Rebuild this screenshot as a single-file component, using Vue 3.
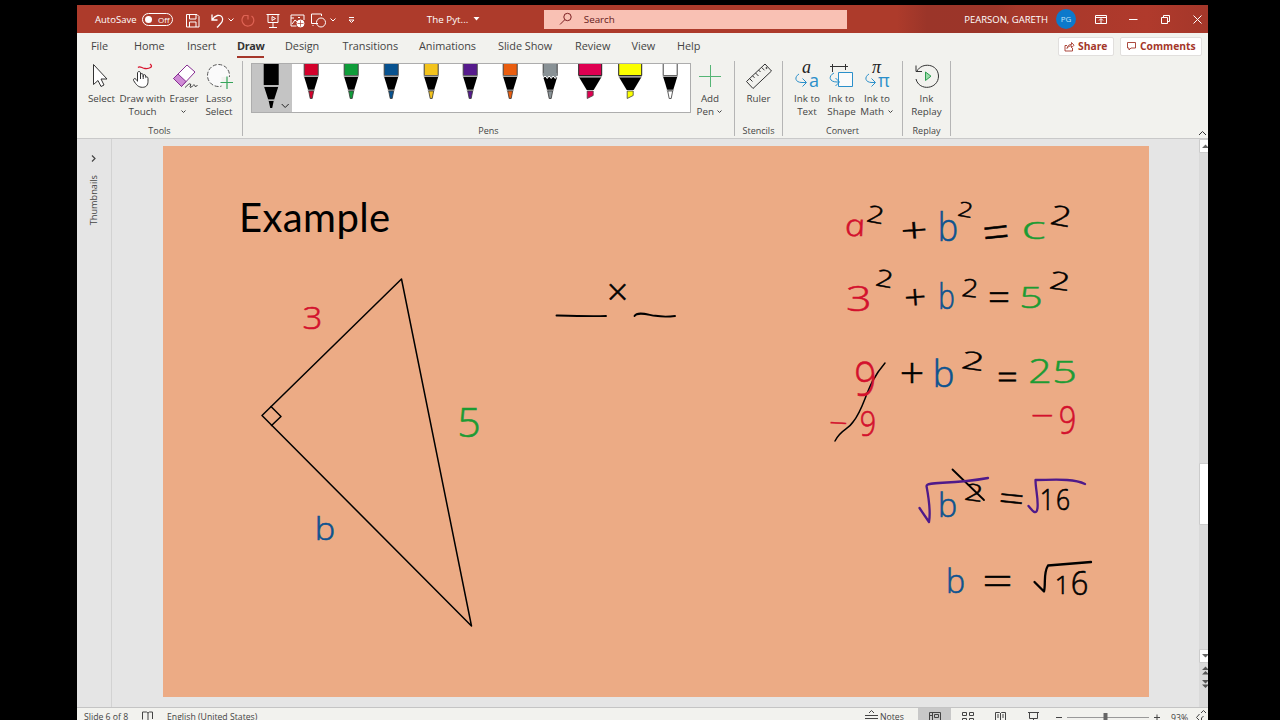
<template>
  <div class="window">
    <!-- TITLE BAR -->
    <header class="titlebar">
      <span class="autosave">AutoSave</span>
      <span class="toggle"><i></i>Off</span>
      <svg class="quick" width="180" height="28" viewBox="0 0 180 28">
        <g fill="none" stroke="#fff" stroke-width="1">
          <path d="M4.500 9.500h10.500l2 2v10.500h-12.500zM7.500 9.500v4.500h6.500v-4.500M7.500 22v-5h6.500v5" />
          <path d="M30 9.500v5.500h5.500M30 15c3-5 8-6 10-3c2.500 4-2 7-5 10.500" stroke-width="1.300" />
          <path d="M46.500 13.500l2.500 2.500l2.500-2.500" />
          <path d="M62 10.500c-4.500 5-.5 11 4.500 10.500c5.500-.5 7-7 3-10M61.500 10.500h4.500v4" stroke="#df6455" stroke-width="1.200" />
          <path d="M84.500 9.500h13M86 9.500v8h10v-8M91 17.500v4.500M87 22.500h8M90 11.500l3.500 2l-3.500 2z" />
          <path d="M114.500 21h-5.500v-11h13v5M109 13h3M110 19l3-4l3 2.500M116 12.500h2" />
          <circle cx="118.500" cy="18.500" r="3.500" fill="#fff" />
          <path d="M115.500 18.500h6M118.500 15.500v6" stroke="#a93a2c" stroke-width=".7" />
          <path d="M136 18.500h-6.500v-9.500h10v2M131 20v1" />
          <circle cx="139" cy="17.500" r="4.500" />
          <path d="M148.500 13.500l2.500 2.500l2.500-2.500" />
          <path d="M167 12.500h5M167 15l2.500 2.500l2.500-2.500z" />
        </g>
      </svg>
      <span class="filename">The Pyt...</span>
      <svg class="caret" width="7" height="4" viewBox="0 0 7 4"><path d="M.5 0h6L3.500 3.500z" fill="#fff" /></svg>
      <div class="search">
        <svg width="14" height="14" viewBox="0 0 14 14" fill="none" stroke="#7c1f22" stroke-width="1">
          <circle cx="8.500" cy="5" r="3.700" /><path d="M5.800 7.700L1 12.500" />
        </svg>
        <span>Search</span>
      </div>
      <span class="user">PEARSON, GARETH</span>
      <span class="avatar">PG</span>
      <svg class="controls" width="120" height="28" viewBox="0 0 120 28" fill="none" stroke="#fff">
        <path d="M7.500 10.500h11v8h-11zM7.500 12.500h11M13 18v-4M11 15.500l2-2l2 2" />
        <path d="M41 14.500h8.500" />
        <path d="M73.500 12.500h6v6h-6zM75.500 12v-1.500h6v6h-1.500" />
        <path d="M105.500 10.500l8 8M113.500 10.500l-8 8" />
      </svg>
    </header>

    <!-- TABS -->
    <nav class="tabs">
      <span v-for="tab in tabs" :key="tab"><b :class="{ active: tab === 'Draw' }">{{ tab }}</b></span>
      <button class="share">
        <svg width="11" height="11" viewBox="0 0 11 11" fill="none" stroke="#a4372a" stroke-width=".9">
          <path d="M3 4.500h-2v5.500h7.500v-3M3 7.500c.5-3 2-4 4.500-4v-2l2.500 2.700l-2.500 2.600v-2c-2 0-3.500 .8-4.500 2.700z" />
        </svg>Share
      </button>
      <button class="comments">
        <svg width="11" height="11" viewBox="0 0 11 11" fill="none" stroke="#a4372a" stroke-width=".9">
          <path d="M1.500 1.500h8v5.500h-4.500l-2 2v-2h-1.500z" />
        </svg>Comments
      </button>
    </nav>

    <!-- RIBBON -->
    <section class="ribbon">
      <div class="group tools">
        <div class="row">
          <div class="tool">
            <svg width="28" height="26" viewBox="0 0 28 26">
              <path d="M5.500 1.500v20l4.500-4l3 6l3-1.500l-3-6h6z" fill="#fff" stroke="#333" />
            </svg>
            <p>Select</p>
          </div>
          <div class="tool">
            <svg width="28" height="26" viewBox="0 0 28 26" fill="none">
              <path d="M9 4.500c2-2 4 .8 7 1c4 .5 9-1.500 5-4.500" stroke="#d8162f" stroke-width="1.300" />
              <path d="M8.500 18v-8c0-2 3-2 3 0v4v-2.500c.5-1.500 2.700-1 2.700 .5v2v-1.500c.5-1.300 2.500-1 2.500 .5v1.500c.5-1 2.300-.8 2.300 .8v3c0 4-2 6-5.500 6c-4 0-6-2-9-7c-.5-1.500 1.500-2.500 2.500-1z" fill="#fff" stroke="#333" />
              <path d="M8.500 10v8.500M11.500 14v2M14.200 14v2" stroke="#333" />
            </svg>
            <p>Draw with<br />Touch</p>
          </div>
          <div class="tool">
            <svg width="28" height="26" viewBox="0 0 28 26" fill="none" stroke="#862d91">
              <path d="M3.500 15.500l13.500-13.500l8 7l-13.500 14.500z" fill="#fff" />
              <path d="M3.500 15.500l4.500-4.500l8 7.500l-4.500 5z" fill="#cf8bd5" />
              <path d="M15 24.500c2-1.500 4-4.500 5.500-3.500c1 1-1.500 3 0 3.500c1.500-.2 2.500-3 3.800-2.500s0 1.500 1.200 1.500s1.500-1 2-1.500" stroke="#333" />
            </svg>
            <p>Eraser<br /><Chevron /></p>
          </div>
          <div class="tool">
            <svg width="28" height="26" viewBox="0 0 28 26" fill="none">
              <circle cx="13.500" cy="12.500" r="11" fill="#fafafa" stroke="#555" stroke-dasharray="4 1.700" />
              <path d="M16.500 14h11v11h-11z" fill="#f2f2ee" />
              <path d="M15.500 19.500h12.500M22 13.500v12.500" stroke="#35a45a" stroke-width="1.200" />
            </svg>
            <p>Lasso<br />Select</p>
          </div>
        </div>
        <footer>Tools</footer>
      </div>

      <div class="group pens">
        <div class="row">
          <div class="gallery">
            <div v-for="(pen, i) in pens" :key="i" class="pen" :class="{ chosen: i === 0 }">
              <svg width="40" height="48" viewBox="0.8 0 40 48">
                <g v-if="pen.kind === 'chosen'">
                  <path d="M12.500 0h15v21h-15zM13 23h14l-4 12.500h-6zM17.500 37h5l-1.500 7h-2z" fill="#000" />
                  <path d="M12.500 22h15M16.500 36.200h7" stroke="#aaa" />
                  <path d="M30.500 40l3.500 3.500l3.500-3.500" fill="none" stroke="#222" />
                </g>
                <g v-else-if="pen.kind === 'marker'">
                  <path d="M8.500-1h23v12.500h-23z" :fill="pen.color" stroke="#222" />
                  <path d="M8.500 12.700h23" stroke="#999" stroke-width="1.500" />
                  <path d="M9 13.500h22l-7.500 12.500h-7z" fill="#000" />
                  <path d="M17 27h6v4.500l-6 3z" :fill="pen.color" stroke="#444" stroke-width=".8" />
                </g>
                <g v-else>
                  <path d="M13-1h14v12.500h-14z" :fill="pen.color" stroke="#444" />
                  <path d="M13 13h14l-4 13h-6z" fill="#000" />
                  <path v-if="pen.kind !== 'pencil'" d="M12.500 12.200h15" stroke="#999" stroke-width="1.300" />
                  <path d="M16.500 26.200h7" stroke="#999" stroke-width="1.300" />
                  <path d="M17.500 27h5l-1.500 7.500h-2z" :fill="pen.color" stroke="#333" stroke-width=".8" />
                  <path v-if="pen.kind === 'pencil'" d="M13 9v5l2-2l2 2.500l2-2.500l2 2.500l2-2.500l2 2.500l2-2.500v-3z" fill="#899296" />
                  <path v-if="pen.kind === 'pencil'" d="M13 14l2-2l2 2.500l2-2.500l2 2.500l2-2.500l2 2.500l2-2.500" fill="none" stroke="#fff" />
                </g>
              </svg>
            </div>
          </div>
          <div class="tool add">
            <svg width="28" height="26" viewBox="0 0 28 26"><path d="M3 13.500h22M14.500 2v22" stroke="#55b575" fill="none" /></svg>
            <p>Add<br />Pen <Chevron /></p>
          </div>
        </div>
        <footer>Pens</footer>
      </div>

      <div class="group stencils">
        <div class="row">
          <div class="tool">
            <svg width="28" height="26" viewBox="0 0 28 26" fill="none" stroke="#333">
              <path d="M1.500 18.500l18.500-17.500l6.500 7l-18.500 17.500zM4.500 15.500l3 3M7.500 12.800l2 2M10.500 10l3 3M13.500 7l2 2M16.500 4.300l3 3" />
              <circle cx="21.500" cy="5" r=".6" />
            </svg>
            <p>Ruler</p>
          </div>
        </div>
        <footer>Stencils</footer>
      </div>

      <div class="group convert">
        <div class="row">
          <div class="tool">
            <svg width="28" height="26" viewBox="0 0 28 26" fill="none">
              <text x="9" y="10" class="glyph-dark">a</text>
              <text x="16" y="24" class="glyph-blue">a</text>
              <path d="M6 11c-5 3-4 8.500 3 8.500h4M9.500 15.500l4 4l-4 4" stroke="#2a8fca" />
            </svg>
            <p>Ink to<br />Text</p>
          </div>
          <div class="tool">
            <svg width="28" height="26" viewBox="0 0 28 26" fill="none">
              <path d="M3 3.500h18M5.500 1v8M18.500 1v6" stroke="#333" />
              <path d="M11.500 9.500h14v14h-14z" stroke="#2a8fca" fill="#fafafa" />
              <path d="M7 10c-6 3-5 9 3 9h2M8.500 15l4 4l-4 4" stroke="#2a8fca" />
            </svg>
            <p>Ink to<br />Shape</p>
          </div>
          <div class="tool">
            <svg width="28" height="26" viewBox="0 0 28 26" fill="none">
              <text x="9" y="10" class="glyph-dark">π</text>
              <text x="15" y="24" class="glyph-blue">π</text>
              <path d="M6 11c-5 3-4 8.500 3 8.500h3M8.500 15.500l4 4l-4 4" stroke="#2a8fca" />
            </svg>
            <p>Ink to<br />Math <Chevron /></p>
          </div>
        </div>
        <footer>Convert</footer>
      </div>

      <div class="group replay">
        <div class="row">
          <div class="tool">
            <svg width="28" height="26" viewBox="0 0 28 26" fill="none">
              <path d="M4 8c5-9 21-7.500 21.500 5c0 13.500-19.500 15.500-22.500 3" stroke="#333" />
              <path d="M3 2.500v6h6" stroke="#333" />
              <path d="M12.500 9v8.500l5.500-4.300z" fill="#9bdca9" stroke="#2d9d50" />
            </svg>
            <p>Ink<br />Replay</p>
          </div>
        </div>
        <footer>Replay</footer>
      </div>
      <svg class="collapse" width="9" height="6" viewBox="0 0 9 6"><path d="M1 5l3.500-3.500L8 5" fill="none" stroke="#333" /></svg>
    </section>

    <!-- WORKSPACE -->
    <main class="workspace">
      <aside class="thumbs">
        <svg width="7" height="9" viewBox="0 0 7 9"><path d="M2 1.500l3 3l-3 3" fill="none" stroke="#444" stroke-width="1.200" /></svg>
        <span>Thumbnails</span>
      </aside>
      <div class="stage">
        <div class="slide">
          <h1>Example</h1>
          <svg class="ink" width="986" height="551" viewBox="163 146 986 551">
            <g fill="none" stroke="#000" stroke-width="1.500" stroke-linejoin="round" stroke-linecap="round">
              <path d="M401.500 279L262 415.500L471.500 626z" />
              <path d="M271 406.500l10 10l-9.500 9" />
              <path d="M556.500 315.500c17 .5 33 1 49.500 .5M634.500 316c3-5 14-1 21-.2c6 1 13 1 19.500 .2" stroke-width="1.900" />
              <path d="M885 363C865 386 866 406 853 422C848 430 841 429 835 441" />
              <path d="M952.500 469.500L984 500" stroke-width="1.800" />
              <g stroke="#4f1a8a" stroke-width="2.300">
                <path d="M919.500 508L929 522C931 511 928 494 926.500 486C927 481 949 485 988 478" />
                <path d="M1028.500 506c4 5 8 10 9 2c1-9-2-19-2-28c17 0 37-2 49.500 4" />
              </g>
              <path d="M1034.500 582l9.500 9.500c2-8-1-18 4-26l43-3.500" stroke-width="2.300" />
            </g>
            <text v-for="(m, i) in marks" :key="i" :transform="place(m)" :fill="m.color" :stroke="m.color" :class="{ round: m.ch === 'a' }">{{ m.ch }}</text>
          </svg>
        </div>
      </div>
      <div class="scroll">
        <svg width="9" height="569" viewBox="0 0 9 569">
          <path d="M.5 .5h9v13h-9zM.5 324.500h9v61h-9zM.5 510.500h9v13h-9z" fill="#fff" stroke="#ccc" />
          <path d="M3 9l3.500-3.500l3.500 3.500zM3 515h7l-3.500 3.500z" fill="#666" />
          <path d="M3 531l3.500-3.500l3.500 3.500zM3 535.500l3.500-3.500l3.500 3.500zM3 541h7l-3.500 3.500zM3 545.500h7l-3.500 3.500z" fill="#555" />
        </svg>
      </div>
    </main>

    <!-- STATUS BAR -->
    <footer class="status">
      <span class="count">Slide 6 of 8</span>
      <svg class="book" width="12" height="13" viewBox="0 0 12 13" fill="none" stroke="#444"><path d="M.5 8.500v-7.500h4l1.500 1l1.500-1h3v7M6 2v8M.5 9.500h4" /></svg>
      <span class="lang">English (United States)</span>
      <svg class="notes-icon" width="13" height="13" viewBox="0 0 13 13" fill="none" stroke="#444"><path d="M4 5l2.500-2.500l2.500 2.500M0 7.500h13M0 10.500h13" /></svg>
      <span class="notes">Notes</span>
      <svg width="290" height="13" viewBox="0 0 290 13" fill="none" stroke="#444">
        <path d="M0 0h33v13h-33z" fill="#c8c8c8" stroke="none" />
        <path d="M11.500 4.500h11v10h-11zM14.500 4v9M11.500 7.500h3M16.500 6.500h4v3h-4z" />
        <path d="M44.500 4.500h4v3h-4zM51.500 4.500h4v3h-4zM44.500 10.500h4v3h-4zM51.500 10.500h4v3h-4z" />
        <path d="M77.500 4.500h4l1 1l1-1h4v8h-10zM82.500 5v8M79 7h2M79 9h2M84 7h2M84 9h2" />
        <path d="M110 4.500h11M111.500 4.500v6h8v-6M115.500 10v3M113 12.500h5" />
        <path d="M138 9.500h6M236 9.500h6M239 6.500v6" />
        <path d="M149 9.500h82" stroke="#999" />
        <path d="M185.500 5h4v8h-4z" fill="#666" stroke="none" />
        <text x="253" y="13" class="zoom">93%</text>
        <path d="M281.500 6l-3 3.500l3 3M285.500 8l-2 2v3h7M283 5l2.500-2.500l2.500 2.500" />
      </svg>
    </footer>
  </div>
</template>

<script setup>
import { h } from "vue";

const tabs = ["File", "Home", "Insert", "Draw", "Design", "Transitions", "Animations", "Slide Show", "Review", "View", "Help"];

const pens = [
  { kind: "chosen", color: "#000000" },
  { kind: "pen", color: "#d3002b" },
  { kind: "pen", color: "#0f9d3a" },
  { kind: "pen", color: "#075290" },
  { kind: "pen", color: "#f3c31c" },
  { kind: "pen", color: "#561b8d" },
  { kind: "pen", color: "#e95d0f" },
  { kind: "pencil", color: "#899296" },
  { kind: "marker", color: "#df0051" },
  { kind: "marker", color: "#fbff00" },
  { kind: "pen", color: "#ffffff" }
];

const Chevron = () =>
  h("svg", { width: 7, height: 6, viewBox: "0 0 7 6" }, [
    h("path", { d: "M1.500 1.500l2 2l2-2", fill: "none", stroke: "#444" })
  ]);

const red = "#d3112d";
const blue = "#0d5390";
const green = "#1c9b33";
const black = "#000000";

// each mark: character, left, top, right, bottom, colour, tilt
const marks = [
  ["a", 846, 219, 864, 236, red, 0],
  ["2", 868, 206, 883, 223, black, 10],
  ["+", 903, 222, 925, 238, black, -4],
  ["b", 940, 211, 956, 241, blue, 0],
  ["2", 959, 202, 972, 217, black, 10],
  ["=", 985, 226, 1007, 238, black, -6],
  ["c", 1023, 222, 1044, 239, green, 0],
  ["2", 1052, 206, 1070, 226, black, 10],
  ["3", 848, 286, 870, 311, red, 0],
  ["2", 877, 270, 892, 287, black, 10],
  ["+", 906, 289, 924, 305, black, -4],
  ["b", 940, 282, 953, 309, blue, 0],
  ["2", 963, 279, 977, 297, black, 6],
  ["=", 990, 292, 1008, 302, black, 0],
  ["5", 1021, 287, 1041, 308, green, 0],
  ["2", 1051, 272, 1069, 290, black, 8],
  ["9", 856, 361, 875, 396, red, 0],
  ["+", 902, 363, 922, 383, black, 0],
  ["b", 935, 359, 952, 387, blue, 0],
  ["2", 963, 352, 983, 370, black, 8],
  ["=", 999, 372, 1016, 381, black, 0],
  ["2", 1030, 359, 1050, 383, green, 0],
  ["5", 1054, 360, 1075, 383, green, 0],
  ["−", 831, 422, 846, 424, red, 3],
  ["9", 861, 411, 875, 436, red, 0],
  ["−", 1033, 415, 1052, 417, red, 0],
  ["9", 1060, 406, 1075, 434, red, 0],
  ["b", 940, 492, 955, 517, blue, 0],
  ["2", 966, 484, 982, 501, black, 8],
  ["=", 1001, 494, 1022, 503, black, 6],
  ["1", 1044, 489, 1050, 510, black, 0],
  ["6", 1057, 489, 1069, 510, black, 0],
  ["b", 948, 567, 963, 593, blue, 0],
  ["=", 985, 575, 1010, 586, black, 0],
  ["1", 1059, 576, 1065, 594, black, 0],
  ["6", 1072, 571, 1087, 595, black, 0],
  ["3", 304, 306, 321, 329, red, 0],
  ["5", 459, 408, 479, 437, green, 0],
  ["b", 317, 516, 333, 540, blue, 0],
  ["×", 610, 284, 625, 299, black, 0]
].map(([ch, left, top, right, bottom, color, tilt]) => ({ ch, left, top, right, bottom, color, tilt }));

// extents of each character at 30px, centred on x: half width, top, bottom
const boxes = {
  a: [7.300, -16.500, 0.300],
  b: [7, -22.800, 0.300],
  c: [6.200, -16.400, 0.300],
  "+": [7, -17.700, -3.700],
  "=": [7, -14.600, -6.800],
  "−": [7, -11.900, -9.600],
  "×": [6.100, -16.900, -4.700],
  1: [3.500, -21.400, 0]
};

function place(m) {
  const [half, top, bottom] = boxes[m.ch] || [7.300, -21.600, 0.200];
  const sx = (m.right - m.left) / (half * 2);
  const sy = (m.bottom - m.top) / (bottom - top);
  const cx = (m.left + m.right) / 2;
  const cy = (m.top + m.bottom) / 2;
  const skew = m.ch === "a" ? 12 : 0;
  return `translate(${cx} ${cy}) rotate(${m.tilt}) skewX(${skew}) scale(${sx} ${sy}) translate(0 ${-(top + bottom) / 2})`;
}
</script>

<style>
html,
body {
  background: #000;
  overflow: hidden;
}
</style>

<style scoped>
.window {
  width: 1131px;
  height: 715px;
  margin: 5px 0 0 77px;
  overflow: hidden;
  display: flex;
  flex-direction: column;
  background: #f2f2ee;
  color: #444;
  font-family: "Open Sans", "Noto Sans", sans-serif;
  font-size: 9.800px;
  white-space: nowrap;
}

svg {
  display: block;
  flex: none;
  overflow: visible;
}

/* ------------------------
   TITLE BAR
------------------------ */
.titlebar {
  height: 28px;
  flex: none;
  display: flex;
  align-items: center;
  color: #fff;
  background: linear-gradient(90deg, #ad3b2b 0 820px, #9b3529 850px, #9c3529 920px, #a6382b 940px, #b03a2c 1070px, #a4372a);
}

.autosave {
  width: 47px;
  margin-left: 18px;
  font-size: 9.500px;
}

.toggle {
  box-sizing: border-box;
  width: 31px;
  height: 13px;
  border: 1px solid #fff;
  border-radius: 7px;
  display: flex;
  align-items: center;
  gap: 6px;
  padding-left: 2px;
  font-size: 8px;
}

.toggle i {
  width: 7px;
  height: 7px;
  border-radius: 50%;
  background: #fff;
}

.quick {
  margin-left: 9px;
}

.filename {
  width: 46px;
  margin-left: 65px;
}

.search {
  width: 304px;
  height: 19px;
  margin-left: 64px;
  display: flex;
  align-items: center;
  background: #f9c1b4;
  color: #651b1b;
}

.search svg {
  margin: 0 11px 0 15px;
}

.user {
  width: 84px;
  margin-left: 117px;
  font-size: 9.500px;
}

.avatar {
  width: 20px;
  height: 20px;
  margin-left: 8px;
  border-radius: 50%;
  background: #0c79cb;
  color: #bfe1f7;
  font-size: 8px;
  line-height: 20px;
  text-align: center;
}

.controls {
  margin-left: 12px;
}

/* ------------------------
   TABS
------------------------ */
.tabs {
  height: 26px;
  flex: none;
  padding-left: 14px;
  display: grid;
  grid-template-columns: 43px 53px 50px 48px 57.500px 76.500px 79px 77px 56.500px 45.500px 381px 62px 82px;
  align-items: center;
  font-size: 10.900px;
  letter-spacing: -.05px;
}

.tabs b {
  display: inline-block;
  height: 20px;
  line-height: 20px;
  font-weight: 400;
}

.tabs b.active {
  font-weight: 700;
  letter-spacing: -.4px;
  color: #333;
  border-bottom: 2px solid #a5372a;
  margin-top: 2px;
}

.tabs button {
  height: 19px;
  padding: 0 0 0 5px;
  display: flex;
  align-items: center;
  gap: 3px;
  border: 1px solid #e1dfdd;
  border-radius: 2px;
  background: #fff;
  color: #a4372a;
  font: 700 10.300px "Open Sans", sans-serif;
}

.share {
  width: 56px;
}

.comments {
  width: 82px;
}

/* ------------------------
   RIBBON
------------------------ */
.ribbon {
  height: 80px;
  flex: none;
  display: flex;
  padding-top: 2px;
  box-sizing: border-box;
  position: relative;
  border-bottom: 1px solid #c9c9c9;
}

.group {
  box-sizing: border-box;
  height: 75px;
  border-right: 1px solid #b5b5b5;
  display: flex;
  flex-direction: column;
  justify-content: space-between;
}

.row {
  display: flex;
  padding-top: 2px;
}

.group footer {
  text-align: center;
  font-size: 9px;
  line-height: 10px;
}

.tool {
  display: flex;
  flex-direction: column;
  align-items: center;
}

.tool p {
  margin: 3px 0 0;
  line-height: 13px;
  text-align: center;
}

.tool p svg {
  display: inline-block;
}

.tools {
  width: 166px;
}

.tools .row {
  display: grid;
  grid-template-columns: 41px 41px 42px 28px;
  padding-left: 4px;
  justify-items: center;
}

.pens {
  width: 492px;
}

.gallery {
  box-sizing: border-box;
  width: 440px;
  height: 50px;
  margin-left: 8px;
  display: grid;
  grid-template-columns: repeat(11, 39.900px);
  border: 1px solid #adadad;
  background: #fff;
  overflow: hidden;
}

.pen.chosen {
  background: #c4c4c4;
}

.add {
  width: 38px;
}

.stencils {
  width: 48px;
}

.stencils .row,
.replay .row {
  justify-content: center;
}

.convert {
  width: 120px;
}

.convert .row {
  display: grid;
  grid-template-columns: 34px 35px 36px;
  padding-left: 7px;
  justify-items: center;
}

.replay {
  width: 48px;
}

.glyph-dark {
  font: italic 18px "Liberation Serif", serif;
  fill: #222;
}

.glyph-blue {
  font: 18px "Open Sans", sans-serif;
  font-weight: 400;
  fill: #2a8fca;
}

.collapse {
  position: absolute;
  right: 1px;
  bottom: 2px;
}

/* ------------------------
   WORKSPACE
------------------------ */
.workspace {
  height: 568px;
  flex: none;
  display: flex;
  background: #e5e5e5;
}

.thumbs {
  box-sizing: border-box;
  width: 35px;
  border-right: 1px solid #d2d2d2;
  display: flex;
  flex-direction: column;
  align-items: center;
  padding: 15px 2px 0 0;
  gap: 12px;
}

.thumbs span {
  writing-mode: vertical-rl;
  transform: rotate(180deg);
  font-size: 9.200px;
}

.stage {
  width: 1087px;
  padding: 7px 0 0 51px;
  box-sizing: border-box;
}

.slide {
  width: 986px;
  height: 551px;
  background: #ecab85;
  position: relative;
}

h1 {
  margin: 0;
  padding: 46px 0 0 76px;
  font: 400 40px/50px Lato, sans-serif;
  letter-spacing: .4px;
  color: #000;
}

.ink {
  position: absolute;
  inset: 0;
}

.ink text {
  font: 300 30px "Open Sans", sans-serif;
  text-anchor: middle;
  stroke-width: .6;
  vector-effect: non-scaling-stroke;
}

.ink text.round {
  font-style: italic;
}

.scroll {
  width: 9px;
  overflow: hidden;
  background: #dadada;
}

/* ------------------------
   STATUS BAR
------------------------ */
.status {
  height: 13px;
  flex: none;
  display: flex;
  border-top: 1px solid #c4c4c4;
  font-size: 8.700px;
  line-height: 18px;
}

.count {
  width: 58px;
  margin-left: 7px;
}

.book {
  margin-top: 3px;
}

.status .lang {
  width: 698px;
  margin-left: 13px;
}

.notes {
  width: 38px;
  margin-left: 2px;
}

.zoom {
  font: 8.700px "Open Sans", sans-serif;
  fill: #444;
  stroke: none;
}
</style>
